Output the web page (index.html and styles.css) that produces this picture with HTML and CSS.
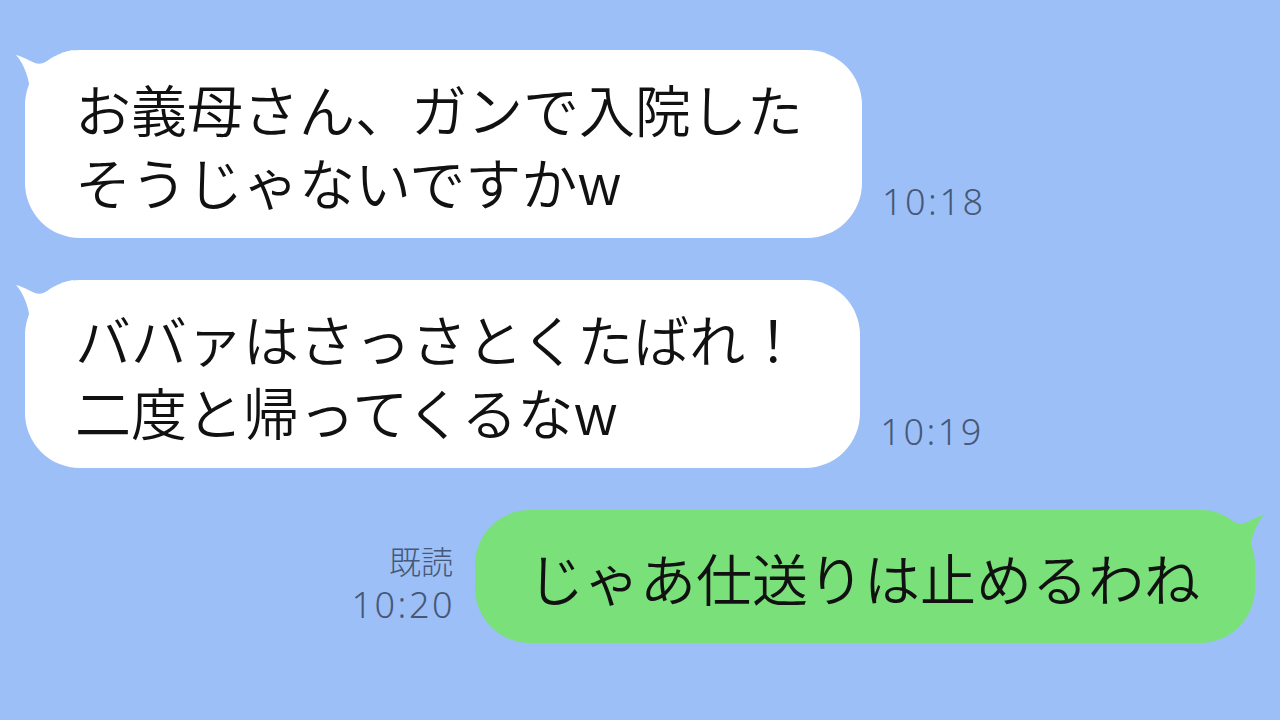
FILE: index.html
```html
<!DOCTYPE html>
<html lang="ja">
<head>
<meta charset="utf-8">
<title>chat</title>
<link rel="stylesheet" href="styles.css">
</head>
<body>
<div class="chat">
  <div class="row left">
    <div class="bubble white">
      <svg class="tail tail-left" viewBox="0 0 70 50" width="70" height="50"><path d="M3,5 C15,8 22,16 30,13 C40,9 48,2 60,0 L60,50 L18,50 C17,28 11,14 3,5 Z"/></svg>
      <p class="text">お義母さん、ガンで入院した<br>そうじゃないですかw</p>
    </div>
    <div class="meta"><span class="time">10:18</span></div>
  </div>
  <div class="row left">
    <div class="bubble white">
      <svg class="tail tail-left" viewBox="0 0 70 50" width="70" height="50"><path d="M3,5 C15,8 22,16 30,13 C40,9 48,2 60,0 L60,50 L18,50 C17,28 11,14 3,5 Z"/></svg>
      <p class="text">ババァはさっさとくたばれ！<br>二度と帰ってくるなw</p>
    </div>
    <div class="meta"><span class="time">10:19</span></div>
  </div>
  <div class="row right">
    <div class="meta meta-right"><span class="read">既読</span><span class="time">10:20</span></div>
    <div class="bubble green">
      <svg class="tail tail-right" viewBox="0 0 70 50" width="70" height="50"><path d="M3,5 C15,8 22,16 30,13 C40,9 48,2 60,0 L60,50 L18,50 C17,28 11,14 3,5 Z"/></svg>
      <p class="text">じゃあ仕送りは止めるわね</p>
    </div>
  </div>
</div>
</body>
</html>
```
FILE: styles.css
```css
html, body {
  margin: 0;
  padding: 0;
}
body {
  width: 1280px;
  height: 720px;
  overflow: hidden;
  background: #9dbff7;
  font-family: "Noto Sans CJK JP", "Noto Sans", sans-serif;
}
.chat {
  display: flex;
  flex-direction: column;
  gap: 42px;
  padding: 50px 25px 0;
}
.row {
  display: flex;
  align-items: flex-end;
}
.row.left {
  gap: 20px;
}
.row.right {
  justify-content: flex-end;
  gap: 22px;
}
.bubble {
  position: relative;
  border-radius: 55px;
}
.bubble.white {
  background: #ffffff;
  padding: 21px 59px 21px 50px;
}
.bubble.green {
  background: #7ae07a;
  padding: 30px 55px 30px 53px;
}
.text {
  position: relative;
  margin: 0;
  font-size: 56px;
  line-height: 73px;
  font-weight: 350;
  color: #111111;
  white-space: nowrap;
}
.tail {
  position: absolute;
  top: 0;
}
.white .tail path { fill: #ffffff; }
.green .tail path { fill: #7ae07a; }
.tail-left {
  left: -12px;
}
.tail-right {
  right: -12px;
  transform: scaleX(-1);
}
.meta {
  display: flex;
  flex-direction: column;
  color: #465876;
  padding-bottom: 17px;
}
.meta-right {
  align-items: flex-end;
  padding-bottom: 19px;
}
.time {
  font-family: "Noto Sans", sans-serif;
  font-size: 36px;
  line-height: 38px;
  font-weight: 300;
  letter-spacing: 2.5px;
  margin-right: -2px;
}
.read {
  font-size: 32px;
  line-height: 40px;
  font-weight: 300;
  margin-bottom: 6px;
}
```
